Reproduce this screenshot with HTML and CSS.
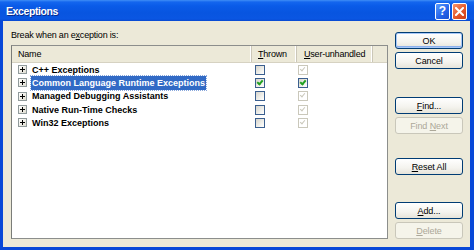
FILE: index.html
```html
<!DOCTYPE html>
<html lang="en">
<head>
    <meta charset="UTF-8">
    <title>Exceptions</title>
    <link rel="stylesheet" href="styles.css">
</head>
<body>
    <div class="window">
        <div class="titlebar">
            <span class="title">Exceptions</span>
            <div class="caption-btns">
                <span class="cbtn help">?</span>
                <span class="cbtn close">
                    <svg width="9" height="9" viewBox="0 0 9 9"><path d="M1 1 L8 8 M8 1 L1 8" stroke="#fff" stroke-width="2" stroke-linecap="square"/></svg>
                </span>
            </div>
        </div>
        <div class="client">
            <div class="main">
                <div class="label">Break when an e<u>x</u>ception is:</div>
                <div class="listbox">
                    <div class="header">
                        <div class="hcol c-name">Name</div>
                        <div class="hcol c-thrown"><u>T</u>hrown</div>
                        <div class="hcol c-user"><u>U</u>ser-unhandled</div>
                        <div class="hcol c-rest"></div>
                    </div>
                    <div class="row">
                        <div class="c-name"><span class="plus"></span><span class="name">C++ Exceptions</span></div>
                        <div class="c-thrown"><span class="cb"></span></div>
                        <div class="c-user"><span class="cb off checked"></span></div>
                    </div>
                    <div class="row">
                        <div class="c-name"><span class="plus"></span><span class="name sel">Common Language Runtime Exceptions</span></div>
                        <div class="c-thrown"><span class="cb checked"></span></div>
                        <div class="c-user"><span class="cb checked"></span></div>
                    </div>
                    <div class="row">
                        <div class="c-name"><span class="plus"></span><span class="name">Managed Debugging Assistants</span></div>
                        <div class="c-thrown"><span class="cb"></span></div>
                        <div class="c-user"><span class="cb off checked"></span></div>
                    </div>
                    <div class="row">
                        <div class="c-name"><span class="plus"></span><span class="name">Native Run-Time Checks</span></div>
                        <div class="c-thrown"><span class="cb"></span></div>
                        <div class="c-user"><span class="cb off checked"></span></div>
                    </div>
                    <div class="row">
                        <div class="c-name"><span class="plus"></span><span class="name">Win32 Exceptions</span></div>
                        <div class="c-thrown"><span class="cb"></span></div>
                        <div class="c-user"><span class="cb off checked"></span></div>
                    </div>
                </div>
            </div>
            <div class="buttons">
                <button class="btn default">OK</button>
                <button class="btn">Cancel</button>
                <button class="btn gap1"><u>F</u>ind...</button>
                <button class="btn" disabled>Find <u>N</u>ext</button>
                <button class="btn gap2"><u>R</u>eset All</button>
                <button class="btn gap3"><u>A</u>dd...</button>
                <button class="btn" disabled><u>D</u>elete</button>
            </div>
        </div>
    </div>
</body>
</html>
```

FILE: styles.css
```css
body {
    margin: 0;
    font-family: "Liberation Sans", Arial, sans-serif;
    font-size: 9px;
    letter-spacing: -0.2px;
    color: #000;
}
.window {
    width: 474px;
    height: 250px;
    display: flex;
    flex-direction: column;
    background: #0848d8;
}
.titlebar {
    height: 21px;
    flex: none;
    display: flex;
    align-items: center;
    justify-content: space-between;
    padding: 0 6px 0 6px;
    background: linear-gradient(#3f8ef6 0, #1466ee 2px, #0a5be8 6px, #0855e0 60%, #0a56e2 90%, #0848d0 100%);
}
.title {
    color: #fff;
    font-weight: bold;
    font-size: 10.5px;
    letter-spacing: -0.4px;
    text-shadow: 1px 1px 0 #0a2a8a;
}
.caption-btns {
    display: flex;
    gap: 2px;
    margin-top: 1px;
    margin-right: 1px;
}
.cbtn {
    width: 13px;
    height: 15px;
    border: 1px solid #fff;
    border-radius: 2px;
    display: flex;
    align-items: center;
    justify-content: center;
    color: #fff;
    font-weight: bold;
    font-size: 12px;
    letter-spacing: 0;
}
.help {
    background: linear-gradient(135deg, #5a9cff, #2463e8 60%, #1a50d0);
}
.close {
    background: linear-gradient(135deg, #f4946c, #e5582a 55%, #cc3e18);
}
.client {
    flex: 1;
    margin: 0 4px 3px 3px;
    background: #ece9d8;
    display: flex;
    padding: 0 7px 0 8px;
}
.main {
    width: 377px;
    display: flex;
    flex-direction: column;
}
.label {
    margin-top: 9px;
    height: 15px;
}
.listbox {
    height: 192px;
    background: #fff;
    border: 1px solid #8c8e8c;
    border-left-color: #7a7c78;
}
.header {
    display: flex;
    height: 16px;
    background: #ece9d8;
    border-bottom: 1px solid #d6d2c2;
}
.hcol {
    display: flex;
    align-items: center;
    border-right: 1px solid #cbc7b8;
    box-shadow: inset -1px 0 0 #fff;
}
.c-name {
    width: 240px;
    padding-left: 6px;
    box-sizing: border-box;
}
.c-thrown {
    width: 45px;
    padding-left: 6px;
    box-sizing: border-box;
}
.c-user {
    width: 76px;
    padding-left: 7px;
    box-sizing: border-box;
}
.c-rest {
    flex: 1;
    border-right: none;
    box-shadow: none;
}
.row {
    display: flex;
    height: 13.3px;
    align-items: center;
}
.row .c-name {
    display: flex;
    align-items: center;
}
.row .c-thrown {
    padding-left: 3px;
}
.row .c-user {
    padding-left: 1px;
}
.plus {
    width: 7px;
    height: 7px;
    border: 1px solid #919b9c;
    background: linear-gradient(135deg, #fff, #e0ddd0);
    position: relative;
    margin-right: 4px;
}
.plus::before {
    content: "";
    position: absolute;
    left: 1px;
    top: 3px;
    width: 5px;
    height: 1px;
    background: #000;
}
.plus::after {
    content: "";
    position: absolute;
    left: 3px;
    top: 1px;
    width: 1px;
    height: 5px;
    background: #000;
}
.name {
    font-weight: bold;
    letter-spacing: 0;
    padding: 1px 1px;
    line-height: 12px;
}
.name.sel {
    background: #316ac5;
    color: #fff;
    outline: 1px dotted #8aa8dc;
}
.cb {
    display: block;
    width: 8px;
    height: 8px;
    border: 1px solid #3b5f8f;
    background: linear-gradient(135deg, #d6d4cc, #f4f4f0 70%, #fff);
    position: relative;
}
.cb.checked::after {
    content: "";
    position: absolute;
    left: 2px;
    top: 0px;
    width: 2px;
    height: 4px;
    border: solid #21a121;
    border-width: 0 2px 2px 0;
    transform: rotate(40deg);
}
.cb.off {
    border-color: #cac8bb;
    background: #fff;
}
.cb.off.checked::after {
    border-color: #cac8bb;
    border-width: 0 1px 1px 0;
}
.buttons {
    display: flex;
    flex-direction: column;
    margin-left: 7px;
    padding-top: 11px;
}
.btn {
    width: 68px;
    height: 17px;
    margin-bottom: 3px;
    font-family: "Liberation Sans", Arial, sans-serif;
    font-size: 9px;
    letter-spacing: -0.1px;
    color: #000;
    border: 1px solid #003c74;
    border-radius: 3px;
    background: linear-gradient(#fff, #f4f3ee 60%, #e6e4da);
    padding: 0;
}
.btn.default {
    box-shadow: inset 0 0 0 1px #a8c8f8, inset 0 -1px 0 1px #8cb0ec;
}
.btn:disabled {
    color: #aca899;
    border-color: #c9c7ba;
    background: #f5f4ea;
}
.gap1 {
    margin-top: 25px;
}
.gap2 {
    margin-top: 21px;
}
.gap3 {
    margin-top: 24px;
}
```
